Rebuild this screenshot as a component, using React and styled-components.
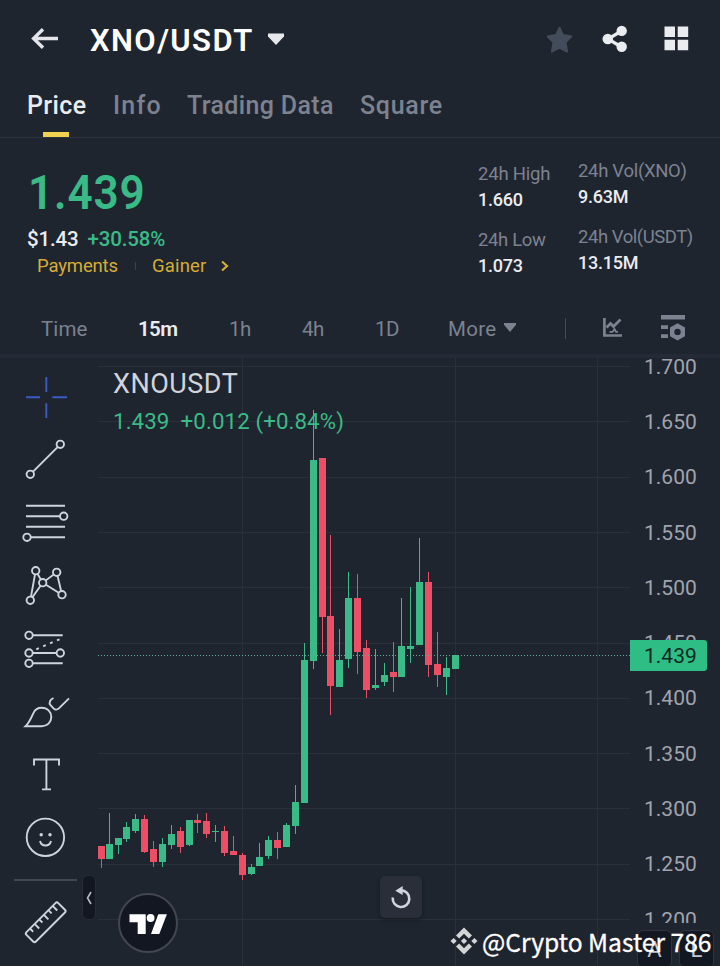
import React from 'react';
import styled, { createGlobalStyle } from 'styled-components';

const colors = {
  bg: '#1f252f',
  text: '#eaecef',
  muted: '#7c8290',
  line: '#2c333d',
  up: '#3aba87',
  down: '#ec4e65',
  gold: '#d6ad37',
  icon: '#cfd3dc',
};

const GlobalStyle = createGlobalStyle`
  body {
    margin: 0;
    background: ${colors.bg};
    font-family: Roboto, "Liberation Sans", sans-serif;
  }
`;

const Screen = styled.main`
  display: flex;
  flex-direction: column;
  width: 720px;
  height: 966px;
  overflow: hidden;
  background: ${colors.bg};
  color: ${colors.text};
  white-space: nowrap;
`;

/* header */

const Header = styled.header`
  display: flex;
  align-items: center;
  flex: none;
  height: 80px;
  padding: 0 31px 0 30px;
`;

const Pair = styled.h1`
  width: 177px;
  margin: 0 0 0 30px;
  font-size: 31px;
  font-weight: 600;
  letter-spacing: 1.4px;
  line-height: 80px;
  padding-top: 1px;
  color: #fff;
`;

const Actions = styled.div`
  display: flex;
  align-items: center;
  gap: 28px;
  margin-left: auto;
  padding-bottom: 2px;
`;

const Tabs = styled.nav`
  display: grid;
  grid-template-columns: 86px 74px 173px auto;
  flex: none;
  height: 57px;
  padding-left: 27px;
  border-bottom: 1px solid ${colors.line};
`;

const Tab = styled.div`
  display: flex;
  flex-direction: column;
  justify-content: space-between;
  justify-self: start;
  align-items: center;
  font-size: 25px;
  font-weight: 500;
  line-height: 51px;
  letter-spacing: ${p => p.$spacing || 0}px;
  color: ${p => (p.$active ? colors.text : colors.muted)};
`;

const Underline = styled.span`
  width: 26px;
  height: 5px;
  margin-right: 2px;
  background: #efd04f;
`;

/* price summary */

const Summary = styled.section`
  display: flex;
  flex: none;
  height: 165px;
`;

const Quote = styled.div`
  width: 451px;
  padding: 31px 0 0 27px;
`;

const LastPrice = styled.div`
  padding-left: 1px;
  font-size: 49px;
  font-weight: 600;
  line-height: 48px;
  letter-spacing: 1px;
  color: ${colors.up};
  transform: scaleX(0.9);
  transform-origin: left;
`;

const Change = styled.div`
  display: flex;
  gap: 9px;
  margin-top: 9px;
  font-size: 20.5px;
  font-weight: 500;
  line-height: 26px;
  letter-spacing: -0.15px;
`;

const Percent = styled.span`
  color: ${colors.up};
`;

const Tags = styled.div`
  display: flex;
  align-items: center;
  margin-top: 1px;
  padding-left: 10px;
  font-size: 18.5px;
  line-height: 26px;
  color: ${colors.gold};
`;

const Tag = styled.span`
  letter-spacing: ${p => p.$spacing}px;
`;

const TagDivider = styled.span`
  width: 1px;
  height: 8px;
  margin: 0 16px 0 17px;
  background: #3b424d;
`;

const Stats = styled.dl`
  width: 100px;
  margin: 0;
  padding-top: ${p => p.$top}px;
  line-height: 26px;
`;

const StatLabel = styled.dt`
  font-size: 18.5px;
  letter-spacing: ${p => p.$spacing}px;
  color: ${colors.muted};
`;

const StatValue = styled.dd`
  margin: 0 0 14px;
  font-size: 18px;
  font-weight: 500;
  letter-spacing: -0.25px;
`;

/* interval bar */

const Intervals = styled.div`
  display: grid;
  grid-template-columns: 97px 91px 73px 73px 73px 117px 38px 58px auto;
  align-items: center;
  flex: none;
  height: 51px;
  padding-left: 41px;
`;

const Interval = styled.div`
  display: flex;
  align-items: center;
  gap: 8px;
  font-size: 20.5px;
  letter-spacing: ${p => p.$spacing || 0}px;
  font-weight: ${p => (p.$active ? 600 : 400)};
  color: ${p => (p.$active ? colors.text : colors.muted)};
`;

const IntervalDivider = styled.span`
  width: 1px;
  height: 21px;
  background: #434955;
`;

const Band = styled.div`
  flex: none;
  height: 4px;
  background: #252b36;
`;

/* chart */

const ChartArea = styled.section`
  position: relative;
  display: flex;
  flex: none;
  height: 608px;
`;

const Toolbar = styled.aside`
  width: 98px;
  padding-top: 8px;
  box-sizing: border-box;
`;

const Tool = styled.svg`
  display: block;
  width: 56px;
  height: 63px;
  margin-left: 18px;
  fill: none;
  stroke: ${p => p.$color || colors.icon};
  stroke-width: 1.9;
`;

const ToolDivider = styled.div`
  width: 63px;
  height: 2px;
  margin: 9px 0 10px 14px;
  background: #434853;
`;

const Candles = styled.svg`
  display: block;
  width: 532px;
  height: 608px;
`;

const Axis = styled.div`
  width: 90px;
  height: 565px;
  overflow: hidden;
  font-size: 21px;
  line-height: 55.3px;
  color: #a0a4ae;
`;

const AxisLabel = styled.div`
  height: 55.3px;
  padding-left: 14px;

  &:first-child {
    margin-top: -18.3px;
  }
`;

const Legend = styled.div`
  position: absolute;
  left: 113px;
  top: 8px;
`;

const Symbol = styled.div`
  font-size: 27px;
  line-height: 36px;
  letter-spacing: 0.5px;
  color: #d1d4dc;
`;

const LegendValues = styled.div`
  display: flex;
  gap: 11px;
  margin-top: 6px;
  font-size: 22.3px;
  line-height: 26px;
  letter-spacing: 0.1px;
  color: ${colors.up};
`;

const PriceTag = styled.div`
  position: absolute;
  left: 630px;
  top: 282px;
  width: 77px;
  height: 31px;
  padding-left: 14px;
  box-sizing: border-box;
  border-radius: 0 3px 3px 0;
  background: #2ebd85;
  color: #10291f;
  font-size: 21px;
  line-height: 32px;
`;

const Collapse = styled.button`
  position: absolute;
  left: 82px;
  top: 517px;
  display: flex;
  align-items: center;
  justify-content: center;
  width: 14px;
  height: 45px;
  padding: 0;
  border: 1px solid #262b36;
  border-radius: 6px;
  background: #131722;
`;

const LogoBadge = styled.div`
  position: absolute;
  left: 118px;
  top: 535px;
  width: 56px;
  height: 56px;
  border: 2px solid #434651;
  border-radius: 50%;
  background: #131722;
`;

const ResetButton = styled.button`
  position: absolute;
  left: 380px;
  top: 518px;
  width: 42px;
  height: 42px;
  padding: 0;
  border: 0;
  border-radius: 5px;
  background: #2a2e39;
  box-shadow: 0 2px 4px rgba(0, 0, 0, 0.35);
`;

const ScaleButtons = styled.div`
  position: absolute;
  left: 637px;
  top: 572px;
  display: flex;
  gap: 7px;
`;

const ScaleButton = styled.button`
  width: 35px;
  height: 38px;
  padding: 0;
  border: 1px solid #30343f;
  border-radius: 6px;
  background: #131722;
  color: #c3c6cf;
  font-family: inherit;
  font-size: 22px;
  line-height: 37px;
`;

const Watermark = styled.div`
  position: absolute;
  left: 450px;
  top: 565px;
  display: flex;
  align-items: center;
  gap: 4px;
  height: 36px;
  font-family: "Noto Sans CJK SC", "Noto Sans", sans-serif;
  font-size: 24.6px;
  font-weight: 400;
  line-height: 36px;
  color: #fff;
  -webkit-text-stroke: 0.3px #fff;
`;

const highLow = [
  { label: '24h High', value: '1.660', spacing: -0.2 },
  { label: '24h Low', value: '1.073', spacing: -0.35 },
];

const volumes = [
  { label: '24h Vol(XNO)', value: '9.63M', spacing: -0.3 },
  { label: '24h Vol(USDT)', value: '13.15M', spacing: -0.45 },
];

const axisPrices = [
  '1.700', '1.650', '1.600', '1.550', '1.500', '1.450',
  '1.400', '1.350', '1.300', '1.250', '1.200',
];

const gridRows = [366, 421, 477, 532, 587, 643, 698, 753, 808, 864, 919];
const gridColumns = [242, 455, 597];

// x, body top, body bottom, wick top, wick bottom, rising
const candles = [
  [98, 846, 859, 846, 868, 0],
  [106, 844, 859, 813, 859, 1],
  [115, 838, 845, 838, 854, 1],
  [123, 827, 839, 822, 842, 1],
  [132, 819, 831, 814, 833, 1],
  [141, 819, 852, 815, 853, 0],
  [150, 849, 862, 841, 867, 0],
  [159, 844, 862, 838, 867, 1],
  [168, 834, 845, 825, 849, 1],
  [177, 831, 847, 827, 853, 0],
  [186, 820, 845, 820, 846, 1],
  [194, 820, 823, 814, 833, 0],
  [203, 821, 834, 813, 838, 0],
  [212, 831, 832, 825, 842, 1],
  [221, 831, 853, 826, 856, 0],
  [230, 851, 855, 836, 855, 0],
  [239, 855, 875, 853, 880, 0],
  [248, 867, 874, 864, 875, 1],
  [256, 857, 866, 843, 866, 1],
  [265, 840, 856, 836, 859, 1],
  [274, 840, 848, 832, 859, 0],
  [283, 825, 847, 823, 847, 1],
  [292, 802, 826, 785, 834, 1],
  [301, 660, 803, 643, 803, 1],
  [310, 460, 661, 410, 669, 1],
  [319, 458, 617, 458, 653, 0],
  [327, 616, 686, 535, 715, 0],
  [336, 660, 687, 629, 687, 1],
  [345, 598, 659, 572, 668, 1],
  [354, 598, 652, 574, 674, 0],
  [363, 648, 690, 640, 698, 0],
  [372, 685, 688, 649, 690, 1],
  [381, 675, 682, 663, 686, 1],
  [390, 672, 677, 642, 692, 0],
  [398, 646, 677, 598, 677, 1],
  [407, 646, 649, 587, 663, 1],
  [416, 582, 645, 538, 645, 1],
  [425, 582, 665, 572, 677, 0],
  [434, 664, 675, 632, 687, 0],
  [443, 668, 677, 657, 695, 1],
  [452, 655, 669, 655, 669, 1],
];

const Dot = ({ x, y }) => <circle cx={x} cy={y} r="3.7" fill={colors.bg} />;

const CandleChart = () => (
  <Candles viewBox="98 358 532 608" shapeRendering="crispEdges">
    {gridRows.map(y => <rect key={y} x="98" y={y} width="532" height="1" fill="#2a303a" />)}
    {gridColumns.map(x => <rect key={x} x={x} y="358" width="1" height="608" fill="#2a303a" />)}
    {candles.map(([x, top, bottom, high, low, rising]) => (
      <g key={x} fill={rising ? colors.up : colors.down}>
        <rect x={x + 3} y={high} width="1" height={low - high} />
        <rect x={x} y={top} width="7" height={bottom - top} />
      </g>
    ))}
    <path d="M98 655.5H630" stroke="#5fae93" strokeDasharray="1 2" />
  </Candles>
);

const DrawingTools = () => (
  <Toolbar>
    <Tool viewBox="18 0 56 63" $color="#3a5bc4">
      <path d="M46.3 11V26M46.3 37.3V52M26 31.3H40M52.3 31.3H67" />
    </Tool>
    <Tool viewBox="18 0 56 63">
      <path d="M30.3 45.3L60.3 15.3" />
      <Dot x={60.3} y={15.3} />
      <Dot x={30.3} y={45.3} />
    </Tool>
    <Tool viewBox="18 0 56 63">
      <path d="M26 13.7H65M26 24.2H60M26 34.7H65M31 45.3H65" />
      <Dot x={63.7} y={24.2} />
      <Dot x={27} y={45.3} />
    </Tool>
    <Tool viewBox="18 0 56 63">
      <path d="M30.3 45.3L35.7 15.7L42.7 27.7L56.7 17.3L62 39.7L42.7 27.7Z" />
      <Dot x={35.7} y={15.7} />
      <Dot x={56.7} y={17.3} />
      <Dot x={42.7} y={27.7} />
      <Dot x={30.3} y={45.3} />
      <Dot x={62} y={39.7} />
    </Tool>
    <Tool viewBox="18 0 56 63">
      <path d="M29 17.3H62.7M29 35H60M29 45.3H62.7" />
      <path d="M36.3 31.3L61.5 20.4" strokeDasharray="2.8 4.7" />
      <Dot x={29} y={17.3} />
      <Dot x={29} y={35} />
      <Dot x={60.3} y={35} />
      <Dot x={29} y={45.3} />
    </Tool>
    <Tool viewBox="18 0 56 63">
      <path d="M25.5 45.3C29.5 41.5 31.5 36 33.5 31.8C35 28.4 38 26.7 41.7 26.7C47.3 26.7 51.3 30.9 51.3 36C51.3 41.3 47.2 45.3 41.7 45.3Z" />
      <path d="M53.5 17C50 18.5 48.5 22 50.5 24.2L53.5 27.4C55 29 57.3 29 58.9 27.4L69 17.3" />
    </Tool>
    <Tool viewBox="18 0 56 63">
      <path d="M34 21.5V15.5H59V21.5M46.4 15.5V45.4M42 45.4H51" />
    </Tool>
    <Tool viewBox="18 0 56 63">
      <circle cx="45.4" cy="30.3" r="18.7" />
      <circle cx="41.2" cy="27.7" r="1.7" fill={colors.icon} stroke="none" />
      <circle cx="50" cy="27.7" r="1.7" fill={colors.icon} stroke="none" />
      <path d="M40 34C41.5 40 49.5 40 51 34" />
    </Tool>
    <ToolDivider />
    <Tool viewBox="18 0 56 63">
      <g transform="translate(45.7 31.3) rotate(-45)">
        <rect x="-22.5" y="-6.7" width="45" height="13.4" rx="2" />
        <path d="M-15.5 -6.7V-2.2M-9 -6.7V-0.2M-2.5 -6.7V-2.2M4 -6.7V-0.2M10.5 -6.7V-2.2M16.5 -6.7V-0.2" />
      </g>
    </Tool>
  </Toolbar>
);

const StatColumn = ({ items, top }) => (
  <Stats $top={top}>
    {items.map(item => (
      <React.Fragment key={item.label}>
        <StatLabel $spacing={item.spacing}>{item.label}</StatLabel>
        <StatValue>{item.value}</StatValue>
      </React.Fragment>
    ))}
  </Stats>
);

const App = () => (
  <>
    <GlobalStyle />
    <Screen>
      <Header>
        <svg width="30" height="24" viewBox="0 0 30 24" fill="none" stroke="#e3e5ea" strokeWidth="3.4">
          <path d="M3.5 10.5H28M13 1.2L3.6 10.5L13 19.8" />
        </svg>
        <Pair>XNO/USDT</Pair>
        <svg width="18" height="16" viewBox="0 0 18 16" fill="#e6e8ec">
          <path d="M1 1.5H17V4.5L9 13L1 4.5Z" />
        </svg>
        <Actions>
          <svg width="28" height="28" viewBox="1.5 -0.5 28 28" fill="#434c5a" stroke="#434c5a" strokeWidth="2" strokeLinejoin="round">
            <path d="M14 2.2L17.4 9.6L26 10.9L20 16.7L21.6 26.2L14 22L6.4 26.2L8 16.7L2 10.9L10.6 9.6Z" />
          </svg>
          <svg width="28" height="28" viewBox="1.5 -0.5 28 28" fill="#eaecef" overflow="visible">
            <path d="M20 5.5L6.5 13.5L20 21.5" fill="none" stroke="#eaecef" strokeWidth="3.2" />
            <circle cx="20.2" cy="5.4" r="5.2" />
            <circle cx="6.3" cy="13.5" r="5.3" />
            <circle cx="20.2" cy="21.3" r="5.2" />
          </svg>
          <svg width="30" height="26" viewBox="0 0 30 26" fill="#eaecef">
            <path d="M5.5 .5H16V11H5.5ZM18.7 .5H29.2V11H18.7ZM5.5 13.8H16V24.3H5.5ZM18.7 13.8H29.2V24.3H18.7Z" />
          </svg>
        </Actions>
      </Header>

      <Tabs>
        <Tab $active $spacing={0.4}>
          Price
          <Underline />
        </Tab>
        <Tab $spacing={1.2}>Info</Tab>
        <Tab $spacing={0.35}>Trading Data</Tab>
        <Tab $spacing={0.7}>Square</Tab>
      </Tabs>

      <Summary>
        <Quote>
          <LastPrice>1.439</LastPrice>
          <Change>
            <span>$1.43</span>
            <Percent>+30.58%</Percent>
          </Change>
          <Tags>
            <Tag $spacing={-0.15}>Payments</Tag>
            <TagDivider />
            <Tag $spacing={0.2}>Gainer</Tag>
            <svg width="10" height="12" viewBox="0 0 10 12" fill="none" stroke="#d6ad37" strokeWidth="2.2" style={{ marginLeft: 13 }}>
              <path d="M2 1.5L7 6L2 10.5" />
            </svg>
          </Tags>
        </Quote>
        <StatColumn items={highLow} top={23} />
        <StatColumn items={volumes} top={20} />
      </Summary>

      <Intervals>
        <Interval $spacing={0.1}>Time</Interval>
        <Interval $active $spacing={-0.6}>15m</Interval>
        <Interval $spacing={-0.4}>1h</Interval>
        <Interval $spacing={-0.4}>4h</Interval>
        <Interval $spacing={-0.4}>1D</Interval>
        <Interval $spacing={0.3}>
          More
          <svg width="12" height="12" viewBox="0 0 12 12" fill={colors.muted}>
            <path d="M0 0H12V1.8L6 9L0 1.8Z" />
          </svg>
        </Interval>
        <IntervalDivider />
        <svg width="20" height="22" viewBox="0 0 20 22" fill="none" stroke="#7c8290" strokeWidth="2.7">
          <path d="M1.4 0V17.5H19" />
          <path d="M3.5 9.5L7.5 5.5L10.5 8.5L17.5 1.5" />
          <path d="M6.5 13.9H9.5L11.5 11L13 13.9H15" strokeWidth="1.8" />
        </svg>
        <svg width="25" height="27" viewBox="0 0 25 27" fill="#7c8290">
          <path d="M0 0H24V4.5H0ZM0 10.3H7V14H0ZM0 19.3H7V23H0Z" />
          <path fillRule="evenodd" d="M16.5 8.3L24 12.4V21.2L16.5 25.5L9 21.2V12.4ZM16.5 13.7A3.2 3.2 0 1 0 16.5 20.1A3.2 3.2 0 1 0 16.5 13.7Z" />
        </svg>
      </Intervals>
      <Band />

      <ChartArea>
        <DrawingTools />
        <CandleChart />
        <Axis>
          {axisPrices.map(price => <AxisLabel key={price}>{price}</AxisLabel>)}
        </Axis>
        <Legend>
          <Symbol>XNOUSDT</Symbol>
          <LegendValues>
            <span>1.439</span>
            <span>+0.012 (+0.84%)</span>
          </LegendValues>
        </Legend>
        <PriceTag>1.439</PriceTag>
        <Collapse>
          <svg width="6" height="14" viewBox="0 0 6 14" fill="none" stroke="#b8bbc5" strokeWidth="1.6">
            <path d="M5 1L1.5 7L5 13" />
          </svg>
        </Collapse>
        <LogoBadge>
          <svg width="56" height="56" viewBox="120 895 56 56" fill="#fff">
            <path d="M129.5 914.3H145.7V934H137.7V922.3H129.5Z" />
            <circle cx="150.6" cy="918" r="3.9" />
            <path d="M158.3 914.3H166.9L159.3 934H151Z" />
          </svg>
        </LogoBadge>
        <ResetButton>
          <svg width="42" height="42" viewBox="380 876 42 42">
            <path d="M392.8 897.5A8.3 8.3 0 1 0 401 890.4" fill="none" stroke="#d1d4dc" strokeWidth="2.6" />
            <path d="M395.3 890.7L402.7 886V895Z" fill="#d1d4dc" />
          </svg>
        </ResetButton>
        <ScaleButtons>
          <ScaleButton>A</ScaleButton>
          <ScaleButton>L</ScaleButton>
        </ScaleButtons>
        <Watermark>
          <svg width="28" height="28" viewBox="0 0 28 28" fill="#d2d4d6">
            <path d="M14 .5L22 8.5L18.8 11.6L14 6.8L9.2 11.6L6 8.5Z" />
            <path d="M14 27.5L22 19.5L18.8 16.4L14 21.2L9.2 16.4L6 19.5Z" />
            <path d="M14 10.9L17.1 14L14 17.1L10.9 14ZM3.6 10.9L6.7 14L3.6 17.1L.5 14ZM24.4 10.9L27.5 14L24.4 17.1L21.3 14Z" />
          </svg>
          <span>@Crypto Master 786</span>
        </Watermark>
      </ChartArea>
    </Screen>
  </>
);

export default App;
